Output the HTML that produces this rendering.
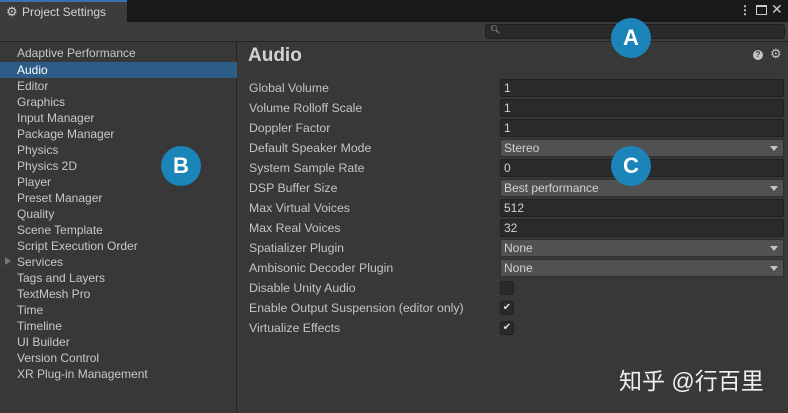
<!DOCTYPE html><html><head><style>
*{margin:0;padding:0;box-sizing:border-box}
body{width:788px;height:413px;background:#383838;font-family:"Liberation Sans","Noto Sans CJK SC",sans-serif;color:#c4c4c4;font-size:12px;position:relative;overflow:hidden}
.a{position:absolute}
.top{left:0;top:0;width:788px;height:22px;background:#191919}
.tab{left:0;top:0;width:127px;height:22px;background:#3c3c3c;border-top:2px solid #3a72b0;color:#d2d2d2;font-size:12px;line-height:20px;padding-left:22px}
.tb{left:0;top:22px;width:788px;height:20px;background:#3c3c3c;border-bottom:1px solid #232323}
.search{left:485px;top:24px;width:300px;height:15px;background:#2a2a2a;border:1px solid #1f1f1f;border-radius:3px}
.left{left:0;top:42px;width:237px;height:371px;background:#383838;border-right:1px solid #232323}
.li{position:absolute;left:17px;height:16px;line-height:16px;font-size:12px;color:#c8c8c8}
.sel{left:0;top:62px;width:237px;height:16px;background:#2c5d87}
.lbl{position:absolute;left:249px;height:20px;line-height:20px;font-size:12.3px;color:#c4c4c4}
.f{position:absolute;left:500px;width:284px;height:18px;background:#2a2a2a;border:1px solid #212121;border-radius:2px;line-height:16px;padding-left:3px;color:#d2d2d2}
.d{background:#515151;border-color:#303030}
.d:after{content:"";position:absolute;right:5px;top:6px;border-left:4px solid transparent;border-right:4px solid transparent;border-top:5px solid #c4c4c4}
.cb{position:absolute;left:500px;width:14px;height:14px;background:#2a2a2a;border:1px solid #212121;border-radius:2px;color:#ddd;font-size:10px;line-height:12px;text-align:center}
.badge{width:40px;height:40px;border-radius:50%;background:#1b84b8;color:#fff;font-weight:bold;font-size:22px;text-align:center;line-height:40px}
</style></head><body>
<div class="a top"></div>
<div class="a tab"><span style="position:absolute;left:6px;top:0;font-size:13px">⚙</span>Project Settings</div>
<div class="a" style="left:739px;top:3px;color:#ccc;font-size:12px;font-weight:bold">⋮</div>
<div class="a" style="left:756px;top:5px;width:11px;height:10px;border:1px solid #ccc;border-top-width:2px"></div>
<div class="a" style="left:771px;top:1px;color:#ccc;font-size:14px">✕</div>
<div class="a tb"></div>
<div class="a search"><span style="position:absolute;left:4px;top:0;font-size:8px;color:#bbb">🔍︎</span></div>
<div class="a left"></div>
<div class="a sel"></div>
<div class="li" style="top:45px">Adaptive Performance</div>
<div class="li" style="top:62px;color:#fff">Audio</div>
<div class="li" style="top:78px">Editor</div>
<div class="li" style="top:94px">Graphics</div>
<div class="li" style="top:110px">Input Manager</div>
<div class="li" style="top:126px">Package Manager</div>
<div class="li" style="top:142px">Physics</div>
<div class="li" style="top:158px">Physics 2D</div>
<div class="li" style="top:174px">Player</div>
<div class="li" style="top:190px">Preset Manager</div>
<div class="li" style="top:206px">Quality</div>
<div class="li" style="top:222px">Scene Template</div>
<div class="li" style="top:238px">Script Execution Order</div>
<div class="a" style="left:5px;top:257px;border-top:4px solid transparent;border-bottom:4px solid transparent;border-left:6px solid #777"></div>
<div class="li" style="top:254px">Services</div>
<div class="li" style="top:270px">Tags and Layers</div>
<div class="li" style="top:286px">TextMesh Pro</div>
<div class="li" style="top:302px">Time</div>
<div class="li" style="top:318px">Timeline</div>
<div class="li" style="top:334px">UI Builder</div>
<div class="li" style="top:350px">Version Control</div>
<div class="li" style="top:366px">XR Plug-in Management</div>
<div class="a" style="left:248px;top:45px;font-size:19px;font-weight:bold;color:#d2d2d2">Audio</div>
<div class="a" style="left:753px;top:50px;width:10px;height:10px;border-radius:50%;background:#c4c4c4;color:#383838;font-size:8px;font-weight:bold;text-align:center;line-height:10px">?</div>
<div class="a" style="left:770px;top:46px;font-size:13px;color:#c4c4c4">⚙</div>
<div class="lbl" style="top:78px">Global Volume</div><div class="f" style="top:79px">1</div>
<div class="lbl" style="top:98px">Volume Rolloff Scale</div><div class="f" style="top:99px">1</div>
<div class="lbl" style="top:118px">Doppler Factor</div><div class="f" style="top:119px">1</div>
<div class="lbl" style="top:138px">Default Speaker Mode</div><div class="f d" style="top:139px">Stereo</div>
<div class="lbl" style="top:158px">System Sample Rate</div><div class="f" style="top:159px">0</div>
<div class="lbl" style="top:178px">DSP Buffer Size</div><div class="f d" style="top:179px">Best performance</div>
<div class="lbl" style="top:198px">Max Virtual Voices</div><div class="f" style="top:199px">512</div>
<div class="lbl" style="top:218px">Max Real Voices</div><div class="f" style="top:219px">32</div>
<div class="lbl" style="top:238px">Spatializer Plugin</div><div class="f d" style="top:239px">None</div>
<div class="lbl" style="top:258px">Ambisonic Decoder Plugin</div><div class="f d" style="top:259px">None</div>
<div class="lbl" style="top:278px">Disable Unity Audio</div><div class="cb" style="top:281px"></div>
<div class="lbl" style="top:298px">Enable Output Suspension (editor only)</div><div class="cb" style="top:301px">✔</div>
<div class="lbl" style="top:318px">Virtualize Effects</div><div class="cb" style="top:321px">✔</div>
<div class="a badge" style="left:611px;top:18px">A</div>
<div class="a badge" style="left:161px;top:146px">B</div>
<div class="a badge" style="left:611px;top:146px">C</div>
<div class="a" style="left:619px;top:362px;font-size:23px;color:#f0f0f0">知乎 @行百里</div>
</body></html>
